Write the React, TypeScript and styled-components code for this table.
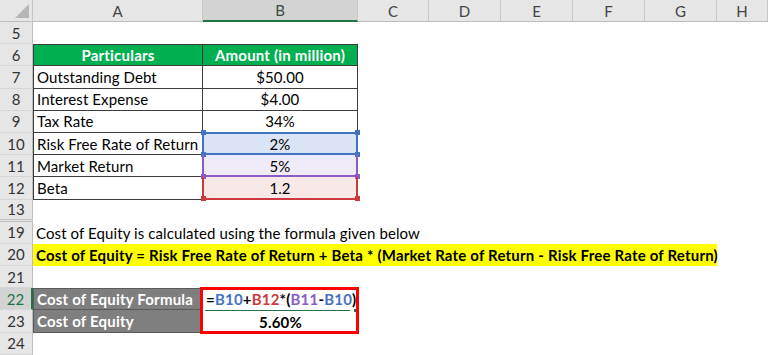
import React from 'react';
import styled, { createGlobalStyle } from 'styled-components';

const GlobalStyle = createGlobalStyle`
  html, body { margin: 0; padding: 0; background: #fff; }
  body { width: 768px; height: 355px; overflow: hidden; }
`;

const COLS = '33px 170px 155px 71px 72px 72px 72px 72px 1fr';
const FONT = `Lato, "Liberation Sans", Arial, sans-serif`;

const Sheet = styled.div`
  display: grid;
  grid-template-columns: ${COLS};
  grid-template-rows: 22px repeat(15, 22.2px);
  width: 768px;
  height: 355px;
  overflow: hidden;
  font-family: ${FONT};
  font-size: 15px;
  color: #000;
  background: #fff;
`;

const Corner = styled.div`
  background: #e6e6e6;
  border-right: 1px solid #c4c4c4;
  border-bottom: 1px solid #bdbdbd;
  display: flex;
  align-items: flex-end;
  justify-content: flex-end;
  padding: 0 3px 3px 0;
  box-sizing: border-box;
`;

const ColHead = styled.div<{ $active?: boolean }>`
  background: ${(p) => (p.$active ? '#d3d3d3' : '#e6e6e6')};
  border-right: 1px solid #c8c8c8;
  border-bottom: ${(p) => (p.$active ? '2px solid #217346' : '1px solid #bdbdbd')};
  color: ${(p) => (p.$active ? '#3b4a42' : '#444')};
  display: flex;
  align-items: center;
  justify-content: center;
  font-size: 15px;
  box-sizing: border-box;
`;

const RowHead = styled.div<{ $active?: boolean; $gap?: boolean }>`
  background: ${(p) => (p.$active ? '#d3d3d3' : '#e6e6e6')};
  border-right: ${(p) => (p.$active ? '2px solid #217346' : '1px solid #bdbdbd')};
  border-bottom: ${(p) => (p.$gap ? '3px double #c0c0c0' : '1px solid #d6d6d6')};
  color: ${(p) => (p.$active ? '#217346' : '#333')};
  display: flex;
  align-items: center;
  justify-content: center;
  font-size: 15px;
  box-sizing: border-box;
`;

type CellProps = {
  $fill?: string;
  $align?: 'left' | 'center';
  $bold?: boolean;
  $color?: string;
  $span?: number;
  $grid?: boolean;
  $left?: boolean;
  $top?: boolean;
  $line?: string;
};

const Cell = styled.div<CellProps>`
  grid-column: span ${(p) => p.$span ?? 1};
  background: ${(p) => p.$fill ?? 'transparent'};
  color: ${(p) => p.$color ?? '#000'};
  font-weight: ${(p) => (p.$bold ? 700 : 400)};
  letter-spacing: ${(p) => (p.$bold ? '0.2px' : '0.1px')};
  display: flex;
  align-items: center;
  justify-content: ${(p) => (p.$align === 'center' ? 'center' : 'flex-start')};
  padding: 0 3px;
  white-space: nowrap;
  overflow: visible;
  box-sizing: border-box;
  border-right: ${(p) => (p.$grid ? `1px solid ${p.$line ?? '#3c3c3c'}` : 'none')};
  border-bottom: ${(p) => (p.$grid ? `1px solid ${p.$line ?? '#3c3c3c'}` : 'none')};
  border-left: ${(p) => (p.$left ? `1px solid ${p.$line ?? '#3c3c3c'}` : 'none')};
  border-top: ${(p) => (p.$top ? `1px solid ${p.$line ?? '#3c3c3c'}` : 'none')};
  position: relative;
`;

const Filler = styled.div<{ $span: number }>`
  grid-column: span ${(p) => p.$span};
`;

const RefBox = styled.span<{ $color: string; $top?: boolean }>`
  position: absolute;
  left: -1px;
  right: -1px;
  top: -1px;
  bottom: -1px;
  border: 2px solid ${(p) => p.$color};
  border-top-color: ${(p) => (p.$top ? p.$color : 'transparent')};
  pointer-events: none;
  z-index: 1;
`;

const Handle = styled.span<{ $c: string; $x: 'l' | 'r'; $y: 't' | 'b' }>`
  position: absolute;
  width: 5px;
  height: 5px;
  background: ${(p) => p.$c};
  ${(p) => (p.$x === 'l' ? 'left: -3.5px;' : 'right: -3.5px;')}
  ${(p) => (p.$y === 't' ? 'top: -3.5px;' : 'bottom: -3.5px;')}
`;

const RedFrame = styled.span`
  position: absolute;
  left: -3px;
  right: -1px;
  top: -1px;
  height: calc(200% + 2px);
  border: 3px solid #ff0000;
  box-sizing: border-box;
  z-index: 3;
  pointer-events: none;
`;

const ActiveCell = styled(Cell)`
  &::after {
    content: '';
    position: absolute;
    left: 2px;
    right: 8px;
    bottom: -1px;
    height: 1px;
    background: #217346;
  }
  &::before {
    content: '';
    position: absolute;
    right: 1px;
    bottom: -2px;
    width: 3px;
    height: 3px;
    background: #217346;
  }
`;

const Ref = styled.span<{ $c: string }>`
  color: ${(p) => p.$c};
`;

const Caret = styled.span`
  display: inline-block;
  width: 1px;
  height: 17px;
  background: #000;
  margin-left: 3px;
`;

const Triangle = () => (
  <svg width="14" height="14" viewBox="0 0 14 14">
    <polygon points="14,0 14,14 0,14" fill="#b6b6b6" />
  </svg>
);

const BLUE = '#4472c4';
const PURPLE = '#8a5cc6';
const RED = '#cc3a3f';

const columns = ['A', 'B', 'C', 'D', 'E', 'F', 'G', 'H'];

type RefMark = { color: string; top?: boolean; corners: Array<['l' | 'r', 't' | 'b']> };
type DataRow = { n: number; label: string; value: string; fill?: string; mark?: RefMark };

const data: DataRow[] = [
  { n: 7, label: 'Outstanding Debt', value: '$50.00' },
  { n: 8, label: 'Interest Expense', value: '$4.00' },
  { n: 9, label: 'Tax Rate', value: '34%' },
  {
    n: 10,
    label: 'Risk Free Rate of Return',
    value: '2%',
    fill: '#dae4f4',
    mark: { color: BLUE, top: true, corners: [['l', 't'], ['r', 't'], ['l', 'b'], ['r', 'b']] },
  },
  {
    n: 11,
    label: 'Market Return',
    value: '5%',
    fill: '#efebf8',
    mark: { color: PURPLE, corners: [['l', 'b'], ['r', 'b']] },
  },
  {
    n: 12,
    label: 'Beta',
    value: '1.2',
    fill: '#f9e8e8',
    mark: { color: RED, corners: [['l', 'b'], ['r', 'b']] },
  },
];

export default function App() {
  return (
    <>
      <GlobalStyle />
      <Sheet>
        <Corner>
          <Triangle />
        </Corner>
        {columns.map((c) => (
          <ColHead key={c} $active={c === 'B'}>
            {c}
          </ColHead>
        ))}

        <RowHead>5</RowHead>
        <Filler $span={8} />

        <RowHead>6</RowHead>
        <Cell $fill="#00b050" $color="#fff" $bold $align="center" $grid $left $top>
          Particulars
        </Cell>
        <Cell $fill="#00b050" $color="#fff" $bold $align="center" $grid $top>
          Amount (in million)
        </Cell>
        <Filler $span={6} />

        {data.map((r) => (
          <React.Fragment key={r.n}>
            <RowHead>{r.n}</RowHead>
            <Cell $grid $left>
              {r.label}
            </Cell>
            <Cell $grid $align="center" $fill={r.fill}>
              {r.value}
              {r.mark && (
                <RefBox $color={r.mark.color} $top={r.mark.top}>
                  {r.mark.corners.map(([x, y]) => (
                    <Handle key={x + y} $c={r.mark!.color} $x={x} $y={y} />
                  ))}
                </RefBox>
              )}
            </Cell>
            <Filler $span={6} />
          </React.Fragment>
        ))}

        <RowHead $gap>13</RowHead>
        <Filler $span={8} />

        <RowHead>19</RowHead>
        <Cell $span={8}>Cost of Equity is calculated using the formula given below</Cell>

        <RowHead>20</RowHead>
        <Cell $span={7} $fill="#ffff00" $bold>
          Cost of Equity = Risk Free Rate of Return + Beta * (Market Rate of Return - Risk Free Rate of Return)
        </Cell>
        <Filler $span={1} />

        <RowHead>21</RowHead>
        <Filler $span={8} />

        <RowHead $active>22</RowHead>
        <Cell $fill="#7f7f7f" $color="#fff" $bold $grid $top $left $line="#5a5a5a">
          Cost of Equity Formula
        </Cell>
        <ActiveCell $bold>
          =<Ref $c={BLUE}>B10</Ref>+<Ref $c={RED}>B12</Ref>*(<Ref $c={PURPLE}>B11</Ref>-
          <Ref $c={BLUE}>B10</Ref>)
          <Caret />
          <RedFrame />
        </ActiveCell>
        <Filler $span={6} />

        <RowHead>23</RowHead>
        <Cell $fill="#7f7f7f" $color="#fff" $bold $grid $left $line="#5a5a5a">
          Cost of Equity
        </Cell>
        <Cell $bold $align="center">
          5.60%
        </Cell>
        <Filler $span={6} />

        <RowHead>24</RowHead>
        <Filler $span={8} />
      </Sheet>
    </>
  );
}
